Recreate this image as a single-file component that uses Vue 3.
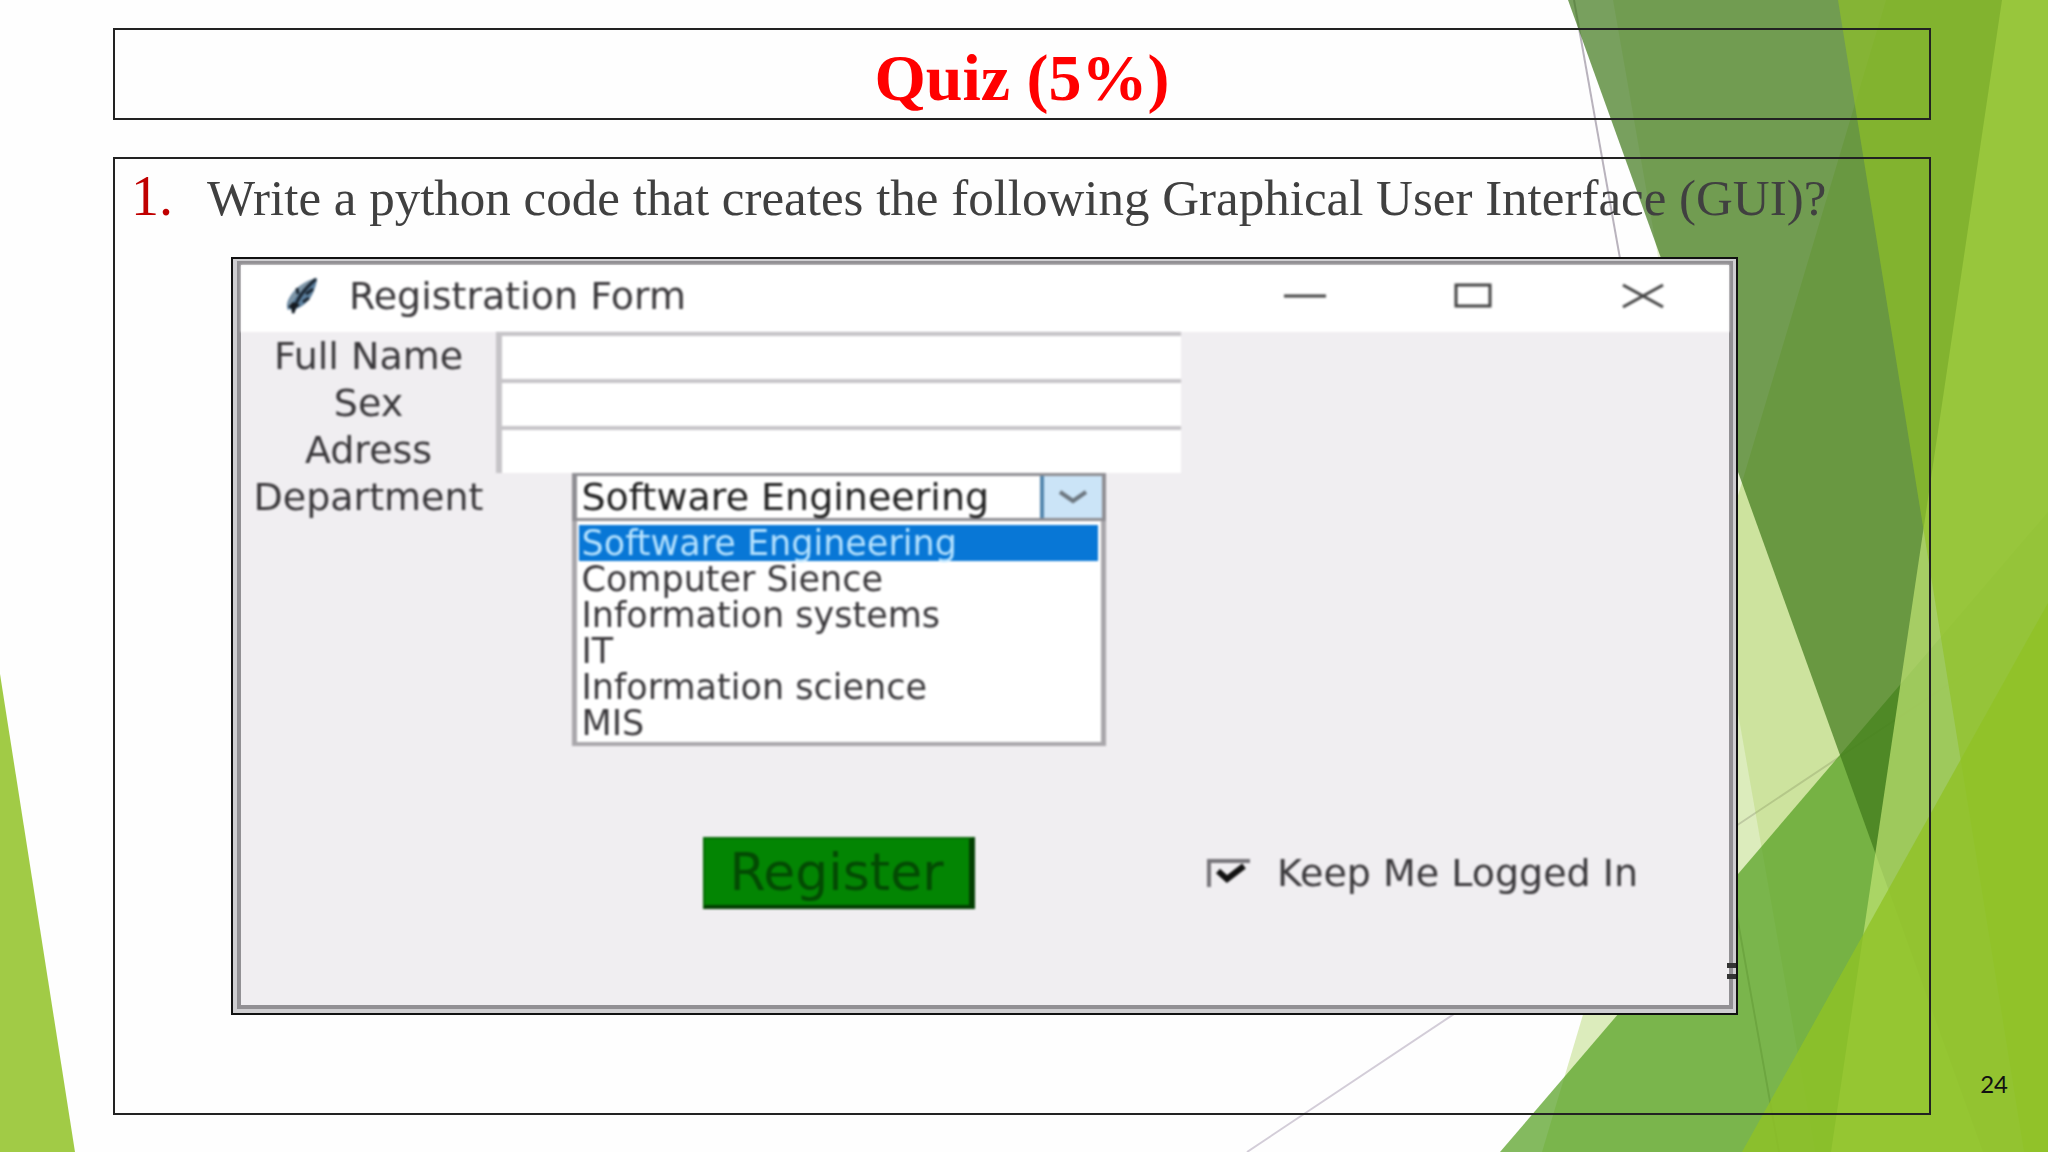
<script setup>
import { ref } from 'vue'

const departments = [
  'Software Engineering',
  'Computer Sience',
  'Information systems',
  'IT',
  'Information science',
  'MIS',
]
const fields = [
  { id: 'full-name', label: 'Full Name' },
  { id: 'sex', label: 'Sex' },
  { id: 'address', label: 'Adress' },
]
const values = ref({ 'full-name': '', sex: '', address: '' })
const department = ref(departments[0])
const keepLoggedIn = ref(true)
</script>

<template>
  <main class="slide">
    <svg class="facets" viewBox="0 0 2048 1152" preserveAspectRatio="none" aria-hidden="true">
      <g stroke="#b9b3bd" stroke-width="2">
        <path d="M1574 0L1779 1152" />
        <path d="M1247 1152L2048 618" stroke="#d3cdd8" />
      </g>
      <path d="M1886 0H2048V1152H1542Z" fill="#90c226" fill-opacity=".3" />
      <path d="M1613 0H2048V1152H1815Z" fill="#90c226" fill-opacity=".2" />
      <path d="M1500 1152L2048 512V1152Z" fill="#54a021" fill-opacity=".72" />
      <path d="M1568 0H2048V1152H1983Z" fill="#3f7819" fill-opacity=".7" />
      <path d="M2002 0H2048V1152H1831Z" fill="#c0e474" fill-opacity=".7" />
      <path d="M1838 0H2048V1152H2024Z" fill="#90c226" fill-opacity=".65" />
      <path d="M1742 1152L2048 603V1152Z" fill="#90c226" fill-opacity=".8" />
      <path d="M0 674L75 1152H0Z" fill="#90c226" fill-opacity=".85" />
    </svg>

    <h1 class="title">Quiz (5%)</h1>

    <section class="body">
      <p class="question"><span class="number">1.</span><span>Write a python code that creates the following Graphical User Interface (GUI)?</span></p>

      <div class="shot">
        <div class="window">
          <header class="titlebar">
            <svg class="feather" viewBox="0 0 36 38" aria-hidden="true">
              <path d="M34 1C24 3 14 9 8 18c-4 6-5 11-3 15l3-1 2 5 3-5c8-3 14-9 17-16 2-5 4-10 4-15Z" fill="#5b7f9e" />
              <path d="M34 1C24 3 15 9 9 18c-4 6-4 10-3 13C12 19 22 9 34 1Z" fill="#7e95a6" />
              <path d="M33 2C21 12 13 22 10 36M20 25l6-4M23 17l7-5M15 17l-1-6" fill="none" stroke="#1b2733" stroke-width="3" />
              <path d="M5 30l3 1 2 6 3-6 4-3-7-3Z" fill="#151a20" />
            </svg>
            <span class="caption">Registration Form</span>
            <div class="controls">
              <button type="button" aria-label="Minimize">
                <svg viewBox="0 0 44 28"><path d="M1 14H43" /></svg>
              </button>
              <button type="button" aria-label="Maximize">
                <svg viewBox="0 0 44 28"><path d="M4 3H38V24H4Z" /></svg>
              </button>
              <button type="button" aria-label="Close">
                <svg viewBox="0 0 44 28"><path d="M2 3L42 25M42 3L2 25" /></svg>
              </button>
            </div>
          </header>

          <form class="form" @submit.prevent>
            <template v-for="field in fields" :key="field.id">
              <label class="label" :for="field.id">{{ field.label }}</label>
              <input :id="field.id" v-model="values[field.id]" class="field" type="text" />
            </template>

            <label class="label" for="department">Department</label>
            <div class="combo">
              <div class="combo-box">
                <select id="department" v-model="department">
                  <option v-for="name in departments" :key="name">{{ name }}</option>
                </select>
                <span class="arrow">
                  <svg viewBox="0 0 32 16" aria-hidden="true"><path d="M3 3L16 12L29 3" /></svg>
                </span>
              </div>
              <ul class="options" role="listbox" aria-label="Department">
                <li
                  v-for="name in departments"
                  :key="name"
                  role="option"
                  :aria-selected="name === department"
                  :class="{ selected: name === department }"
                  @click="department = name"
                >{{ name }}</li>
              </ul>
            </div>

            <button class="register" type="submit">Register</button>
            <label class="keep">
              <input v-model="keepLoggedIn" type="checkbox" />
              <svg viewBox="0 0 44 28" aria-hidden="true">
                <path d="M2 28V2H43" fill="none" stroke="#77757a" stroke-width="4" />
                <path v-if="keepLoggedIn" d="M11 12L20 20L37 7" fill="none" stroke="#111" stroke-width="6" />
              </svg>
              <span>Keep Me Logged In</span>
            </label>
          </form>
        </div>
      </div>
    </section>

    <span class="page">24</span>
  </main>
</template>

<style>
body {
  margin: 0;
  background: #fff;
}
</style>

<style scoped>
.slide {
  position: relative;
  box-sizing: border-box;
  display: flex;
  flex-direction: column;
  gap: 37px;
  min-height: 100vh;
  padding: 28px 117px 37px 113px;
  overflow: hidden;
  background: #fefefe;
}

.facets {
  position: absolute;
  inset: 0;
  width: 100%;
  height: 100%;
}

.title,
.body {
  position: relative;
  border: 2px solid #222;
}

.title {
  margin: 0;
  padding: 12px 0 4px;
  color: #f00;
  font: bold 66px/72px "Liberation Serif", serif;
  text-align: center;
}

.body {
  flex: 1;
}

.question {
  display: flex;
  align-items: baseline;
  margin: 0;
  padding: 1px 0 0 16px;
  color: #404040;
  font: 51px/72px "Liberation Serif", serif;
}

.number {
  width: 76px;
  color: #c00000;
  font-size: 56px;
}

.shot {
  position: relative;
  margin: 23px 191px 0 116px;
  padding: 2px 3px 4px 4px;
  border: 2px solid #111;
  background: #cfced1;
}

.shot::after {
  content: "";
  position: absolute;
  right: 0;
  bottom: 34px;
  width: 9px;
  height: 6px;
  border: solid #333;
  border-width: 5px 0;
}

.window {
  border: 4px solid #929094;
  background: #f0eef1;
  color: #3a383b;
  font: 38px/36px "DejaVu Sans", sans-serif;
}

.titlebar,
.form {
  filter: blur(1px);
}

.titlebar {
  display: flex;
  align-items: center;
  height: 67px;
  box-sizing: border-box;
  padding: 0 64px 6px 42px;
  background: #fff;
}

.feather {
  width: 36px;
  height: 38px;
  margin-right: 30px;
}

.controls {
  display: flex;
  gap: 125px;
  margin-left: auto;
}

.controls button {
  display: flex;
  padding: 0;
  border: 0;
  background: none;
}

.controls svg {
  width: 44px;
  height: 28px;
  fill: none;
  stroke: #444;
  stroke-width: 3;
}

.form {
  display: grid;
  grid-template-columns: 255fr 685fr 548fr;
  grid-auto-rows: minmax(47px, auto);
  padding-bottom: 96px;
}

.label {
  grid-column: 1;
  height: 47px;
  line-height: 48px;
  text-align: center;
}

.field {
  grid-column: 2;
  box-sizing: border-box;
  width: 100%;
  height: 47px;
  padding: 0 8px;
  border: solid #c6c4c8;
  border-width: 4px 0 0 6px;
  background: #fff;
  color: inherit;
  font: inherit;
}

.combo {
  grid-column: 2;
  width: 534px;
  margin: 0 auto;
}

.combo-box {
  display: flex;
  box-sizing: border-box;
  height: 48px;
  border: solid #8f8e93;
  border-width: 3px 4px 3px 5px;
  background: #fff;
}

.combo-box select {
  flex: 1;
  min-width: 0;
  padding: 0 0 0 5px;
  border: 0;
  background: none;
  color: #222;
  font: inherit;
  line-height: 42px;
  appearance: none;
}

.arrow {
  display: grid;
  place-items: center;
  width: 58px;
  border-left: 4px solid #5386ad;
  background: #cbe4f7;
}

.arrow svg {
  width: 32px;
  height: 16px;
  fill: none;
  stroke: #6d7780;
  stroke-width: 4;
}

.options {
  box-sizing: border-box;
  height: 225px;
  margin: 0;
  padding: 4px 3px 0 2px;
  border: solid #a9a7ab;
  border-width: 0 5px 4px;
  background: #fff;
  font-size: 35px;
  list-style: none;
}

.options li {
  padding-left: 3px;
}

.options .selected {
  background: #0877d6;
  color: #b5e2ff;
}

.register {
  grid-column: 2;
  box-sizing: border-box;
  width: 272px;
  height: 72px;
  margin: 91px auto 0;
  padding: 0;
  border: solid #033f03;
  border-width: 2px 6px 4px 2px;
  border-top-color: #056b05;
  border-left-color: #056b05;
  background: #038503;
  color: #034a03;
  font: 52px/60px "DejaVu Sans", sans-serif;
}

.keep {
  position: relative;
  grid-column: 3;
  display: flex;
  align-items: center;
  gap: 26px;
  height: 72px;
  margin: 91px 0 0 26px;
  white-space: nowrap;
}

.keep input {
  position: absolute;
  width: 44px;
  height: 28px;
  margin: 0;
  opacity: 0;
}

.keep svg {
  width: 44px;
  height: 28px;
}

.page {
  position: absolute;
  right: 40px;
  bottom: 52px;
  color: #111;
  font: 24px/32px Lato, sans-serif;
}
</style>
